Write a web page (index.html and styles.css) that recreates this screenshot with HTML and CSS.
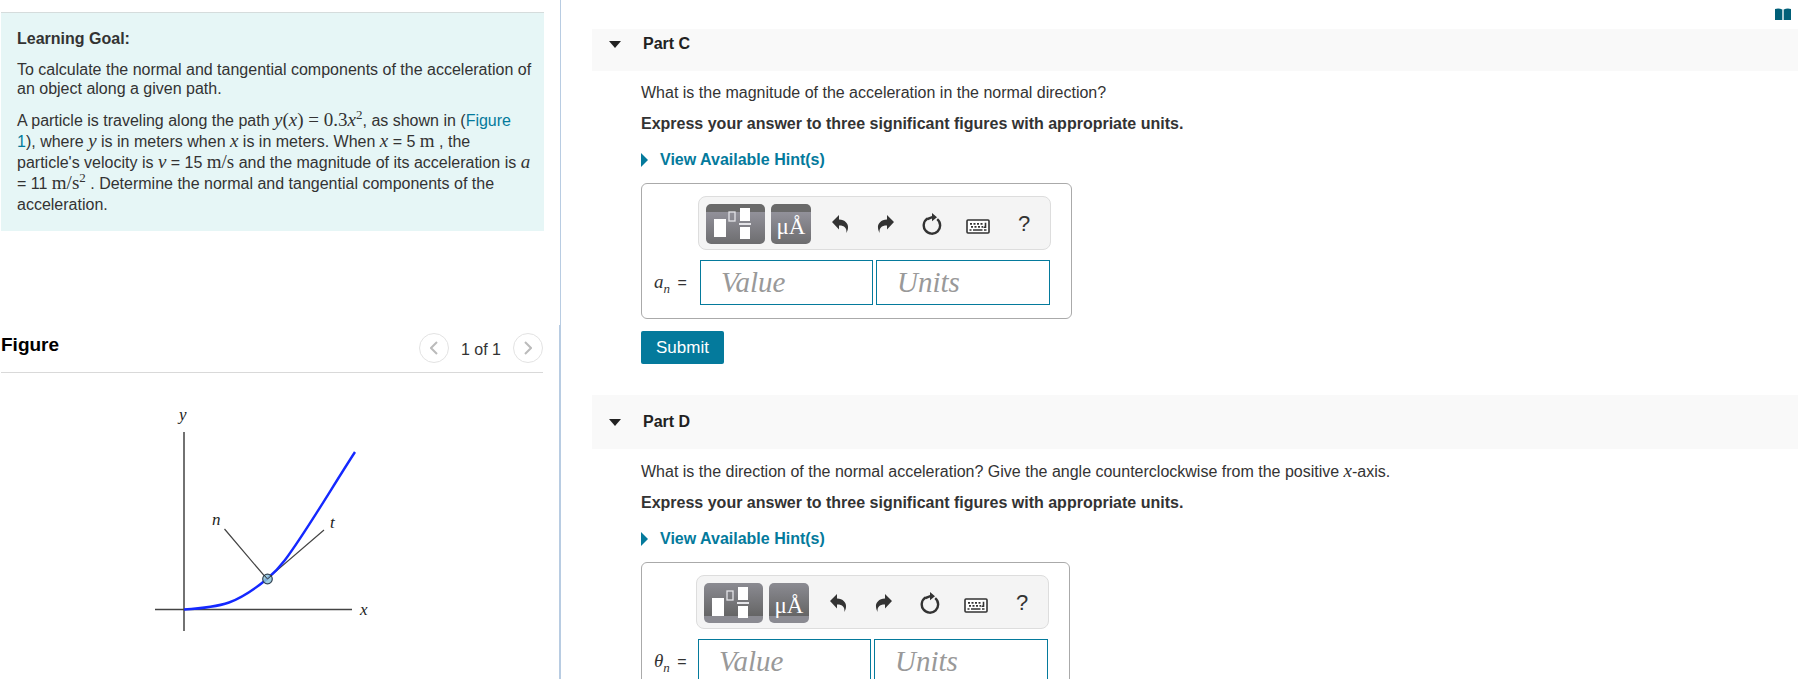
FILE: index.html
```html
<!DOCTYPE html>
<html lang="en">
<head>
  <meta charset="UTF-8">
  <title>Normal and Tangential Components</title>
  <link rel="stylesheet" href="styles.css">
</head>
<body>

  <svg class="sprite" aria-hidden="true">
    <symbol id="icon-template" viewBox="0 0 59 40">
      <rect x="8" y="15" width="12" height="18" fill="#fff"/>
      <rect x="23" y="8" width="6" height="9" fill="none" stroke="#e4e4e8" stroke-width="1.3"/>
      <rect x="34" y="4" width="10" height="13" fill="#fff"/>
      <rect x="33" y="19" width="12" height="2" fill="#e4e4e8"/>
      <rect x="34" y="23" width="10" height="12" fill="#fff"/>
    </symbol>
    <symbol id="icon-undo" viewBox="0 0 18 20">
      <path d="M8 1v4.500c6 .2 9.500 4 9 8.500-.1 1.800-.8 3.500-1.600 5 .6-5-2-7.600-7.400-7.500v4L1 8z" fill="#333"/>
    </symbol>
    <symbol id="icon-reset" viewBox="0 0 20 22">
      <path d="M5.500 5.600A8.200 8.200 0 1 0 15.200 6.200" fill="none" stroke="#333" stroke-width="2.400"/>
      <path d="M10 0l5 4.300-5 4V5.600L6 7.200 4.600 5l5.400-2z" fill="#333"/>
    </symbol>
    <symbol id="icon-keyboard" viewBox="0 0 24 16">
      <rect x="1" y="1" width="22" height="13" rx="1" fill="#fff" stroke="#333" stroke-width="1.600"/>
      <path d="M4 4.800h13M5 7.800h12" stroke="#333" stroke-width="1.800" stroke-dasharray="2 1.500"/>
      <path d="M3.500 11h2M7 11h9.500M18 11h2.500M19.500 3.800v4.500h-2" fill="none" stroke="#333" stroke-width="1.600"/>
    </symbol>
  </svg>

  <div class="page">
    <aside class="left">
      <div class="intro">
        <section class="goal">
          <h2>Learning Goal:</h2>
          <p>To calculate the normal and tangential components of the acceleration of an object along a given path.</p>
          <p class="problem">A particle is traveling along the path <span class="math"><i>y</i>(<i>x</i>) = 0.3<i>x</i><sup>2</sup></span>, as shown in (<a href="#figure">Figure<br>1</a>), where <i class="math">y</i> is in meters when <i class="math">x</i> is in meters. When <i class="math">x</i> = 5 <span class="math">m</span> , the<br>particle's velocity is <i class="math">v</i> = 15 <span class="math">m/s</span> and the magnitude of its acceleration is <i class="math">a</i><br>= 11 <span class="math">m/s<sup>2</sup></span> . Determine the normal and tangential components of the<br>acceleration.</p>
        </section>
      </div>

      <section class="figure" id="figure">
        <div class="figure-head">
          <h2>Figure</h2>
          <div class="pager">
            <button aria-label="Previous figure"><svg width="8" height="14" viewBox="0 0 8 14"><path d="M7 1L1 7l6 6" fill="none" stroke="#bbb" stroke-width="2"/></svg></button>
            <span>1 of 1</span>
            <button aria-label="Next figure"><svg width="8" height="14" viewBox="0 0 8 14"><path d="M1 1l6 6-6 6" fill="none" stroke="#bbb" stroke-width="2"/></svg></button>
          </div>
        </div>
        <svg class="graph" width="230" height="240" viewBox="150 400 230 240">
          <g fill="none" stroke="#444" stroke-width="1.500">
            <path d="M184 432V631M155 609.500H352"/>
            <path d="M224.500 529L267 579L324 530" stroke-width="1.200"/>
          </g>
          <path d="M184 609.500C200 608.500 216 607 229 602.500C244 597 256 588 267 579C274 573 279 568 285 560C306 532 331 489 355 452" fill="none" stroke="#1428ff" stroke-width="2.400"/>
          <circle cx="267.500" cy="579" r="4.800" fill="#8fc4d8" fill-opacity=".85" stroke="#345" stroke-width="1.200"/>
          <path d="M264 575l3.500 4 4.500-4" fill="none" stroke="#333"/>
          <text x="179" y="420">y</text>
          <text x="212" y="525">n</text>
          <text x="330" y="528">t</text>
          <text x="360" y="615">x</text>
        </svg>
      </section>
    </aside>

    <main class="right">
      <div class="topbar">
        <a href="#" aria-label="Textbook"><svg width="16" height="13" viewBox="0 0 16 13"><path d="M0 1q4-1 7.200.5V12H0zM16 1q-4-1-7.200.5V12H16z" fill="#005f78"/><path d="M8 1.500V12" stroke="#8cb8c4"/></svg></a>
      </div>

      <div class="parts">
        <section class="part">
          <h2><button class="part-head">Part C</button></h2>
          <div class="part-body">
            <p>What is the magnitude of the acceleration in the normal direction?</p>
            <p class="express">Express your answer to three significant figures with appropriate units.</p>
            <button class="hints">View Available Hint(s)</button>
            <div class="answer">
              <label for="value-c"><span class="symbol"><i>a</i><sub>n</sub></span> =</label>
              <div class="editor">
                <div class="toolbar">
                  <button class="dark wide" aria-label="Templates"><svg width="59" height="40"><use href="#icon-template"/></svg></button>
                  <button class="dark">μÅ</button>
                  <button class="tool" aria-label="Undo"><svg width="18" height="20"><use href="#icon-undo"/></svg></button>
                  <button class="tool redo" aria-label="Redo"><svg width="18" height="20"><use href="#icon-undo"/></svg></button>
                  <button class="tool" aria-label="Reset"><svg width="20" height="22"><use href="#icon-reset"/></svg></button>
                  <button class="tool keys" aria-label="Keyboard shortcuts"><svg width="24" height="16"><use href="#icon-keyboard"/></svg></button>
                  <button class="tool help">?</button>
                </div>
                <div class="fields">
                  <input type="text" id="value-c" placeholder="Value">
                  <input type="text" aria-label="Units" placeholder="Units">
                </div>
              </div>
            </div>
            <button class="submit">Submit</button>
          </div>
        </section>

        <section class="part">
          <h2><button class="part-head">Part D</button></h2>
          <div class="part-body">
            <p>What is the direction of the normal acceleration? Give the angle counterclockwise from the positive <i class="math">x</i>-axis.</p>
            <p class="express">Express your answer to three significant figures with appropriate units.</p>
            <button class="hints">View Available Hint(s)</button>
            <div class="answer theta">
              <label for="value-d"><span class="symbol"><i>θ</i><sub>n</sub></span> =</label>
              <div class="editor">
                <div class="toolbar">
                  <button class="dark wide" aria-label="Templates"><svg width="59" height="40"><use href="#icon-template"/></svg></button>
                  <button class="dark">μÅ</button>
                  <button class="tool" aria-label="Undo"><svg width="18" height="20"><use href="#icon-undo"/></svg></button>
                  <button class="tool redo" aria-label="Redo"><svg width="18" height="20"><use href="#icon-undo"/></svg></button>
                  <button class="tool" aria-label="Reset"><svg width="20" height="22"><use href="#icon-reset"/></svg></button>
                  <button class="tool keys" aria-label="Keyboard shortcuts"><svg width="24" height="16"><use href="#icon-keyboard"/></svg></button>
                  <button class="tool help">?</button>
                </div>
                <div class="fields">
                  <input type="text" id="value-d" placeholder="Value">
                  <input type="text" aria-label="Units" placeholder="Units">
                </div>
              </div>
            </div>
            <button class="submit">Submit</button>
          </div>
        </section>
      </div>
    </main>
  </div>

</body>
</html>
```
FILE: styles.css
```css
* {
  box-sizing: border-box;
}

body {
  margin: 0;
  font-family: "Liberation Sans", Arial, sans-serif;
  font-size: 16px;
  line-height: 19px;
  color: #333;
  background: #fff;
}

h2,
p {
  margin: 0;
  font-size: 16px;
}

button {
  font-family: inherit;
  font-size: 16px;
  padding: 0;
  border: none;
  background: none;
  color: inherit;
  cursor: pointer;
}

a {
  color: #047a9c;
  text-decoration: none;
}

svg {
  display: block;
}

.sprite {
  display: none;
}

.math,
.symbol {
  font-family: "Liberation Serif", "Times New Roman", serif;
  font-size: 19px;
  line-height: 19px;
}

sup,
sub {
  font-size: 13px;
  line-height: 0;
}

.page {
  display: flex;
  height: 100vh;
  overflow: hidden;
}

/* left column */
.left {
  flex: 0 0 561px;
  display: flex;
  flex-direction: column;
}

.intro {
  height: 325px;
  padding: 12px 16px 0 1px;
  border-right: 1px solid #b8cce2;
}

.goal {
  padding: 16px 8px 16px 16px;
  background: #e6f6f6;
  border-top: 1px solid #d5dcdc;
}

.goal p {
  margin-top: 12px;
}

.goal .problem {
  line-height: 21px;
}

.problem .math {
  line-height: 16px;
}

.figure {
  flex: 1;
  padding: 8px 16px 0 1px;
  border-right: 2px solid #b8cce2;
}

.figure-head {
  display: flex;
  justify-content: space-between;
  align-items: flex-start;
  height: 40px;
  border-bottom: 1px solid #d9d9d9;
}

.figure-head h2 {
  margin-top: 2px;
  font-size: 19px;
  color: #000;
}

.pager {
  display: flex;
  align-items: center;
  gap: 12px;
}

.pager span {
  padding-top: 3px;
}

.pager button {
  display: flex;
  align-items: center;
  justify-content: center;
  width: 30px;
  height: 30px;
  border: 1px solid #e3e3e3;
  border-radius: 50%;
}

.graph {
  margin: 27px 0 0 149px;
}

.graph text {
  font: italic 17px "Liberation Serif", serif;
  fill: #222;
}

/* right column */
.right {
  flex: 1;
  min-width: 0;
  display: flex;
  flex-direction: column;
  padding-left: 31px;
}

.topbar {
  display: flex;
  justify-content: flex-end;
  flex: 0 0 29px;
  padding: 8px 7px 0 0;
}

.parts {
  flex: 1;
  overflow: hidden;
}

.part {
  margin-bottom: 31px;
}

/* first header is partly scrolled under the top bar */
.part:first-child {
  margin-top: -12px;
}

.part-head {
  display: flex;
  align-items: center;
  gap: 22px;
  width: 100%;
  height: 54px;
  padding-left: 17px;
  background: #f9f9f9;
  font-weight: bold;
  color: #222;
}

.part-head::before {
  content: "";
  border: 6px solid transparent;
  border-top: 7px solid #222;
  border-bottom: 0;
}

.part-body {
  padding: 12px 0 0 49px;
}

.express {
  margin-top: 12px;
  font-weight: bold;
}

.hints {
  display: flex;
  align-items: center;
  gap: 12px;
  margin: 17px 0 14px;
  line-height: 19px;
  font-weight: bold;
  color: #047a9c;
}

.hints::before {
  content: "";
  border: 7px solid transparent;
  border-left: 7px solid #047a9c;
  border-right: 0;
}

.answer {
  display: flex;
  align-items: flex-end;
  width: 431px;
  height: 136px;
  padding: 0 20px 13px 12px;
  border: 1px solid #aaa;
  border-radius: 6px;
}

.answer.theta {
  width: 429px;
}

.answer label {
  flex: 1;
  height: 33px;
}

.answer .symbol {
  margin-right: 3px;
}

.answer sub {
  font-style: italic;
}

.editor {
  width: 353px;
}

.toolbar {
  display: flex;
  align-items: center;
  height: 54px;
  padding: 1px 0 0 7px;
  background: #f4f4f4;
  border: 1px solid #ddd;
  border-radius: 8px;
}

.dark {
  width: 40px;
  height: 40px;
  margin-right: 6px;
  padding-top: 6px;
  border-radius: 5px;
  background: linear-gradient(#6a6a6a 0, #6a6a6a 8px, #92919a 8px, #6d6d6f 100%);
  color: #fff;
  font-family: "Liberation Serif", serif;
  font-size: 23px;
}

.dark.wide {
  width: 59px;
  padding: 0;
}

.theta .dark {
  background: linear-gradient(#8b8b92 0, #656565 33px, #8b8b92 33px, #8b8b92 100%);
}

.tool {
  display: flex;
  align-items: center;
  justify-content: center;
  width: 46px;
  height: 40px;
}

.redo svg {
  transform: scaleX(-1);
}

.keys {
  padding-top: 6px;
}

.help {
  font-size: 22px;
}

.fields {
  display: grid;
  grid-template-columns: 173px 1fr;
  gap: 3px;
  margin-top: 10px;
  padding: 0 1px 0 2px;
}

.fields input {
  min-width: 0;
  height: 45px;
  padding: 0 20px;
  border: 1px solid #047a9c;
  border-radius: 0;
  background: #fff;
  font: italic 29px "Liberation Serif", "Times New Roman", serif;
}

.fields input::placeholder {
  color: #999;
}

.submit {
  margin-top: 12px;
  width: 83px;
  height: 33px;
  border-radius: 2px;
  background: #047a9c;
  color: #fff;
  font-size: 17px;
}
```
